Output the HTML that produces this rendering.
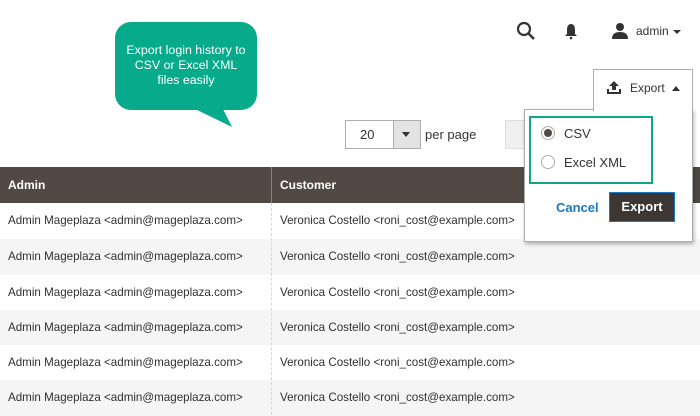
<!DOCTYPE html><html><head><style>
*{margin:0;padding:0;box-sizing:border-box}
body{width:700px;height:415px;overflow:hidden;background:#fff;font-family:"Liberation Sans",sans-serif;position:relative;color:#303030}
.a{position:absolute}
.row{position:absolute;left:0;width:700px;height:36px;font-size:11.6px;color:#303030}
.row span{position:absolute;top:11px}
</style></head><body>
<svg class="a" style="left:516px;top:21px" width="20" height="20" viewBox="0 0 20 20"><circle cx="8" cy="8" r="6" fill="none" stroke="#333" stroke-width="2.2"/><line x1="12.5" y1="12.5" x2="18" y2="18" stroke="#333" stroke-width="2.5"/></svg>
<svg class="a" style="left:564px;top:23px" width="14" height="17" viewBox="0 0 14 17"><path d="M7 1C4 1 3 4 3 7v4l-2 2h12l-2-2V7c0-3-1-6-4-6z" fill="#333"/><circle cx="7" cy="15" r="1.3" fill="#333"/></svg>
<svg class="a" style="left:611px;top:22px" width="18" height="18" viewBox="0 0 18 18"><circle cx="9" cy="5" r="4" fill="#333"/><path d="M1 17c0-5 3-7 8-7s8 2 8 7z" fill="#333"/></svg>
<div class="a" style="left:636px;top:24px;font-size:12px;color:#333">admin</div>
<div class="a" style="left:673px;top:30px;border-left:4px solid transparent;border-right:4px solid transparent;border-top:4px solid #333"></div>
<div class="a" style="left:115px;top:22px;width:142px;height:88px;background:#07ab8c;border-radius:16px;color:#fff;font-size:12.4px;text-align:center;line-height:15px;padding-top:21px">Export login history to<br>CSV or Excel XML<br>files easily</div>
<svg class="a" style="left:190px;top:105px" width="45" height="24"><path d="M5 4L42 4L42 4L33 4L42 22Z" fill="#07ab8c"/></svg>
<div class="a" style="left:345px;top:120px;width:76px;height:29px;border:1px solid #adadad"></div>
<div class="a" style="left:393px;top:121px;width:27px;height:27px;background:#e3e3e3;border-left:1px solid #adadad"></div>
<div class="a" style="left:402px;top:132px;border-left:4px solid transparent;border-right:4px solid transparent;border-top:5px solid #333"></div>
<div class="a" style="left:360px;top:127px;font-size:13px">20</div>
<div class="a" style="left:425px;top:127px;font-size:13px;color:#333">per page</div>
<div class="a" style="left:505px;top:120px;width:22px;height:29px;background:#f0f0f0;border:1px solid #ddd"></div>
<div class="a" style="left:0;top:167px;width:700px;height:36px;background:#514943"></div>
<div class="a" style="left:271px;top:167px;width:1px;height:36px;background:#8a837f"></div>
<div class="a" style="left:8px;top:178px;color:#fff;font-size:12px;font-weight:bold">Admin</div>
<div class="a" style="left:280px;top:178px;color:#fff;font-size:12px;font-weight:bold">Customer</div>
<div class="row" style="top:203px;background:#fff"><span style="left:8px">Admin Mageplaza &lt;admin@mageplaza.com&gt;</span><span style="left:280px">Veronica Costello &lt;roni_cost@example.com&gt;</span></div>
<div class="row" style="top:239px;background:#f5f5f5"><span style="left:8px">Admin Mageplaza &lt;admin@mageplaza.com&gt;</span><span style="left:280px">Veronica Costello &lt;roni_cost@example.com&gt;</span></div>
<div class="row" style="top:275px;background:#fff"><span style="left:8px">Admin Mageplaza &lt;admin@mageplaza.com&gt;</span><span style="left:280px">Veronica Costello &lt;roni_cost@example.com&gt;</span></div>
<div class="row" style="top:310px;background:#f5f5f5"><span style="left:8px">Admin Mageplaza &lt;admin@mageplaza.com&gt;</span><span style="left:280px">Veronica Costello &lt;roni_cost@example.com&gt;</span></div>
<div class="row" style="top:345px;background:#fff"><span style="left:8px">Admin Mageplaza &lt;admin@mageplaza.com&gt;</span><span style="left:280px">Veronica Costello &lt;roni_cost@example.com&gt;</span></div>
<div class="row" style="top:380px;background:#f5f5f5"><span style="left:8px">Admin Mageplaza &lt;admin@mageplaza.com&gt;</span><span style="left:280px">Veronica Costello &lt;roni_cost@example.com&gt;</span></div>
<div class="a" style="left:271px;top:203px;height:212px;border-left:1px dashed #d6d6d6"></div>
<div class="a" style="left:524px;top:109px;width:169px;height:133px;background:#fff;border:1px solid #adadad;box-shadow:1px 2px 4px rgba(0,0,0,.3)"></div>
<div class="a" style="left:593px;top:69px;width:100px;height:42px;background:#fff;border:1px solid #adadad;border-bottom:none"></div>
<svg class="a" style="left:606px;top:80px" width="16" height="15" viewBox="0 0 16 15"><path d="M8 1L3 6h3v4h4V6h3z" fill="#333"/><path d="M1 9v5h14V9h-2v3H3V9z" fill="#333"/></svg>
<div class="a" style="left:630px;top:81px;font-size:12px;color:#333">Export</div>
<div class="a" style="left:672px;top:86px;border-left:4px solid transparent;border-right:4px solid transparent;border-bottom:5px solid #333"></div>
<div class="a" style="left:529px;top:116px;width:124px;height:68px;border:2px solid #11a68a"></div>
<div class="a" style="left:541px;top:126px;width:14px;height:14px;border-radius:50%;border:1px solid #adadad"></div>
<div class="a" style="left:545px;top:130px;width:6px;height:6px;border-radius:50%;background:#514943;box-shadow:0 0 0 1px #514943"></div>
<div class="a" style="left:564px;top:126px;font-size:13px;color:#333">CSV</div>
<div class="a" style="left:541px;top:155px;width:14px;height:14px;border-radius:50%;border:1px solid #adadad"></div>
<div class="a" style="left:564px;top:155px;font-size:13px;color:#333">Excel XML</div>
<div class="a" style="left:556px;top:200px;font-size:13px;font-weight:bold;color:#1979c3">Cancel</div>
<div class="a" style="left:609px;top:192px;width:66px;height:30px;background:#3d3733;border:1px solid #1979c3;color:#fff;font-size:13px;font-weight:bold;text-align:center;line-height:28px">Export</div>
</body></html>
